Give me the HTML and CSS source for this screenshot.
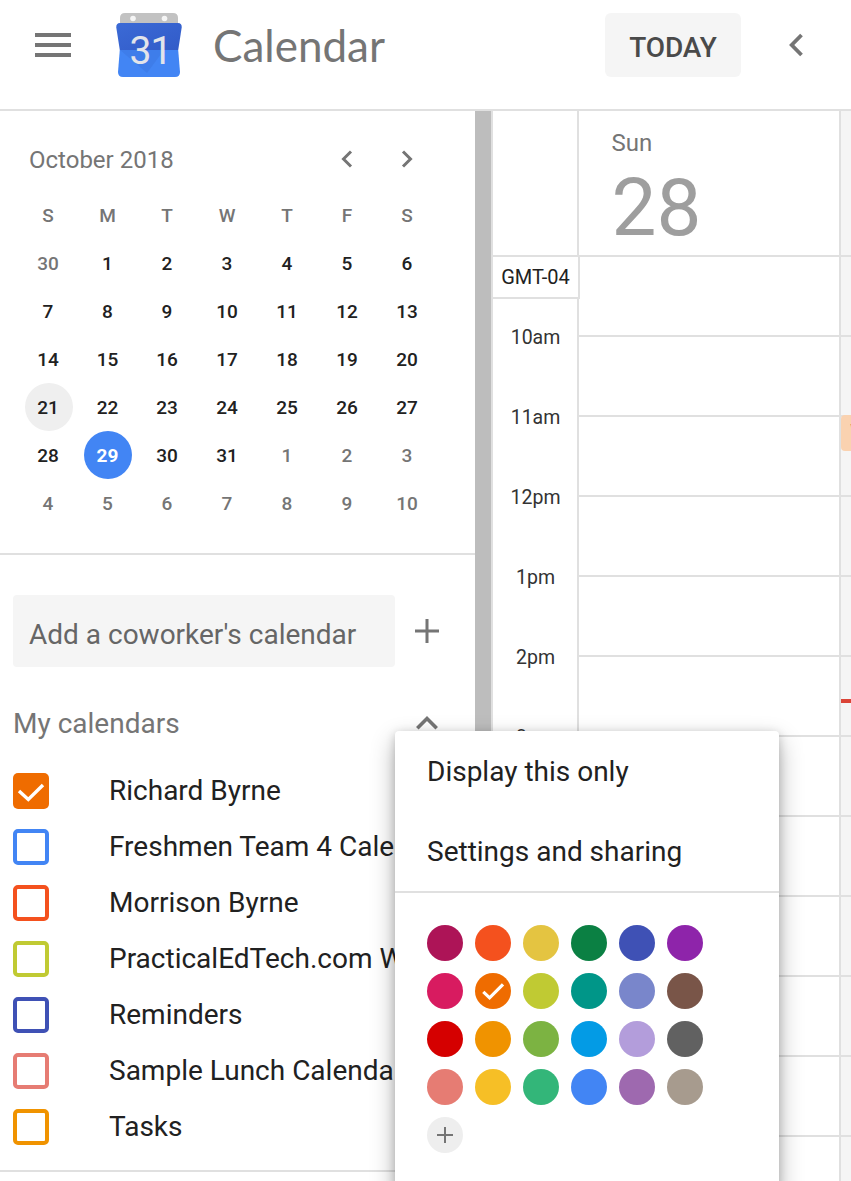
FILE: index.html
```html
<!DOCTYPE html>
<html lang="en">
<head>
<meta charset="utf-8">
<title>Calendar</title>
<link rel="stylesheet" href="styles.css">
</head>
<body>
<div class="app">
  <header class="topbar">
    <svg class="menu-icon" width="36" height="24" viewBox="0 0 36 24"><path fill="#757575" d="M0 0h36v4H0zM0 10h36v4H0zM0 20h36v4H0z"/></svg>
    <svg class="logo" width="66" height="66" viewBox="0 0 66 66">
      <defs>
        <linearGradient id="top" x1="0" y1="0" x2="1" y2="1"><stop offset="0" stop-color="#3b6ad6"/><stop offset="1" stop-color="#325bc8"/></linearGradient>
      </defs>
      <path fill="#c2c2c2" d="M4 14V5q0-5 5-5h48q5 0 5 5v9z"/>
      <circle cx="17" cy="5.500" r="2.800" fill="#f5f5f5"/><circle cx="48.500" cy="5.500" r="2.800" fill="#f5f5f5"/>
      <path fill="url(#top)" d="M4 10h58q4 0 3.700 4.500L62.200 37H3.800L.3 14.500Q0 10 4 10z"/>
      <path fill="#4285f4" d="M3.800 37h58.400L64 59q0 5-5 5H7q-5 0-5-5z"/>
      <path fill="#3c78e2" d="M4 37h44L31 60z" opacity=".6"/>
      <text class="logo-text" x="34.500" y="51" text-anchor="middle">31</text>
    </svg>
    <h1 class="brand">Calendar</h1>
    <button class="today">TODAY</button>
    <svg class="prev" width="14" height="24" viewBox="0 0 14 24"><path fill="none" stroke="#757575" stroke-width="3.800" d="M12.500 2 2.700 12l9.800 10"/></svg>
  </header>

  <main class="main">
    <aside class="sidebar">
      <section class="mini">
        <div class="mini-head">
          <span class="month">October 2018</span>
          <svg class="mini-prev" width="12" height="18" viewBox="0 0 12 18"><path fill="none" stroke="#757575" stroke-width="3" d="M10 1.500 2.500 9l7.500 7.500"/></svg>
          <svg class="mini-next" width="12" height="18" viewBox="0 0 12 18"><path fill="none" stroke="#757575" stroke-width="3" d="M2 1.500 9.500 9 2 16.500"/></svg>
        </div>
        <div class="days">
          <span class="dim">S</span><span class="dim">M</span><span class="dim">T</span><span class="dim">W</span><span class="dim">T</span><span class="dim">F</span><span class="dim">S</span>
          <span class="dim">30</span><span>1</span><span>2</span><span>3</span><span>4</span><span>5</span><span>6</span>
          <span>7</span><span>8</span><span>9</span><span>10</span><span>11</span><span>12</span><span>13</span>
          <span>14</span><span>15</span><span>16</span><span>17</span><span>18</span><span>19</span><span>20</span>
          <span class="hover">21</span><span>22</span><span>23</span><span>24</span><span>25</span><span>26</span><span>27</span>
          <span>28</span><span class="current">29</span><span>30</span><span>31</span><span class="dim">1</span><span class="dim">2</span><span class="dim">3</span>
          <span class="dim">4</span><span class="dim">5</span><span class="dim">6</span><span class="dim">7</span><span class="dim">8</span><span class="dim">9</span><span class="dim">10</span>
        </div>
      </section>

      <div class="coworker">
        <div class="field">Add a coworker's calendar</div>
        <svg width="24" height="24" viewBox="0 0 24 24"><path fill="none" stroke="#757575" stroke-width="3" d="M12 0v24M0 12h24"/></svg>
      </div>

      <div class="group-head">
        <span>My calendars</span>
        <svg width="22" height="14" viewBox="0 0 22 14"><path fill="none" stroke="#757575" stroke-width="3.600" d="m1.300 12.300 9.700-9.700 9.700 9.700"/></svg>
      </div>
      <ul class="calendars">
        <li><span class="box checked"><svg width="36" height="36" viewBox="0 0 36 36"><path fill="none" stroke="#fff" stroke-width="3.400" d="m6 18 9.300 8.500L30 12"/></svg></span><span class="name">Richard Byrne</span></li>
        <li><span class="box blue"></span><span class="name">Freshmen Team 4 Calendar</span></li>
        <li><span class="box tangerine"></span><span class="name">Morrison Byrne</span></li>
        <li><span class="box lime"></span><span class="name">PracticalEdTech.com We</span></li>
        <li><span class="box indigo"></span><span class="name">Reminders</span></li>
        <li><span class="box salmon"></span><span class="name">Sample Lunch Calendar</span></li>
        <li><span class="box amber"></span><span class="name">Tasks</span></li>
      </ul>
    </aside>
    <div class="scrollbar"></div>

    <div class="gutter">
      <div class="gutter-head"></div>
      <div class="zone">GMT-04</div>
      <div class="hours">
        <span>10am</span><span>11am</span><span>12pm</span><span>1pm</span><span>2pm</span><span>3pm</span>
      </div>
    </div>

    <section class="day">
      <div class="day-head"><span class="weekday">Sun</span><span class="date">28</span></div>
      <div class="slots"></div>
    </section>
    <section class="next-day">
      <div class="next-head"></div>
      <div class="slots"><div class="event">W</div><div class="now"></div></div>
    </section>
  </main>

  <div class="popup">
    <div class="item">Display this only</div>
    <div class="item">Settings and sharing</div>
    <div class="swatches">
      <i style="background:#ad1457"></i><i style="background:#f4511e"></i><i style="background:#e4c441"></i><i style="background:#0b8043"></i><i style="background:#3f51b5"></i><i style="background:#8e24aa"></i>
      <i style="background:#d81b60"></i><i style="background:#ef6c00"><svg width="36" height="36" viewBox="0 0 36 36"><path fill="none" stroke="#fff" stroke-width="3.200" d="m8.300 18.800 6.300 6L28 11.300"/></svg></i><i style="background:#c0ca33"></i><i style="background:#009688"></i><i style="background:#7986cb"></i><i style="background:#795548"></i>
      <i style="background:#d50000"></i><i style="background:#f09300"></i><i style="background:#7cb342"></i><i style="background:#039be5"></i><i style="background:#b39ddb"></i><i style="background:#616161"></i>
      <i style="background:#e67c73"></i><i style="background:#f6bf26"></i><i style="background:#33b679"></i><i style="background:#4285f4"></i><i style="background:#9e69af"></i><i style="background:#a79b8e"></i>
      <i style="background:#eeeeee"><svg width="36" height="36" viewBox="0 0 36 36"><path fill="none" stroke="#757575" stroke-width="2" d="M18 10v16M10 18h16"/></svg></i>
    </div>
  </div>
</div>
</body>
</html>
```

FILE: styles.css
```css
* { box-sizing: border-box; }
body { margin: 0; background: #fff; font-family: Roboto, "Liberation Sans", sans-serif; color: #212121; }
svg { display: block; flex: none; }
.app { position: relative; width: 851px; height: 1181px; overflow: hidden; display: flex; flex-direction: column; }

.topbar { height: 111px; flex: none; border-bottom: 2px solid #e0e0e0; display: flex; align-items: flex-start; }
.menu-icon { margin: 33px 0 0 35px; }
.logo { margin: 13px 0 0 45px; }
.logo-text { font: 400 39px Roboto, sans-serif; letter-spacing: -1px; fill: #e2e4ea; }
.brand { margin: 17px 0 0 31px; width: 392px; height: 56px; line-height: 56px; font-family: Lato, sans-serif; font-weight: 400; font-size: 44px; color: #757575; white-space: nowrap; }
.today { margin-top: 13px; width: 136px; height: 64px; padding: 5px 0 0; border: 0; border-radius: 6px; background: #f5f5f5; color: #4a4a4a; font: 500 28px Roboto, sans-serif; letter-spacing: -.1px; }
.prev { margin: 33px 0 0 48px; }

.main { flex: 1; min-height: 0; display: flex; }
.sidebar { width: 475px; height: 1061px; flex: none; overflow: hidden; border-bottom: 2px solid #e0e0e0; }
.scrollbar { width: 16px; flex: none; background: #bdbdbd; }

.mini { height: 444px; border-bottom: 2px solid #e0e0e0; }
.mini-head { height: 80px; padding: 17px 0 0 29px; display: flex; align-items: center; }
.month { width: 312px; font-size: 24px; line-height: 28px; color: #757575; }
.mini-prev { margin: 0 48px 2px 0; }
.mini-next { margin-bottom: 2px; }
.days { width: 419px; margin-left: 18px; display: grid; grid-template-columns: 60px 59px repeat(5, 60px); grid-auto-rows: 48px; justify-items: center; font-size: 19px; font-weight: 500; line-height: 50px; text-align: center; }
.days span { width: 48px; height: 48px; }
.dim { color: #757575; }
.days .hover { margin-left: 2px; text-indent: -2px; border-radius: 50%; background: #efefef; }
.days .current { margin-left: 1px; text-indent: -1px; border-radius: 50%; background: #4285f4; color: #fff; font-weight: 700; }

.coworker { margin: 40px 0 0 13px; display: flex; align-items: center; gap: 20px; }
.field { width: 382px; height: 72px; padding: 4px 16px 0; border-radius: 4px; background: #f5f5f5; color: #666; font-size: 28px; line-height: 72px; white-space: nowrap; }
.group-head { height: 96px; padding: 16px 0 0 13px; display: flex; align-items: center; color: #757575; font-size: 28px; }
.group-head span { width: 403px; padding-top: 1px; }
.calendars { margin: 0; padding: 0 0 0 13px; list-style: none; }
.calendars li { height: 56px; display: flex; align-items: center; gap: 60px; font-size: 28px; white-space: nowrap; }
.name { padding-bottom: 2px; }
.box { width: 36px; height: 36px; flex: none; border: 4px solid; border-radius: 5px; }
.checked { border: 0; background: #ef6c00; }
.blue { border-color: #4285f4; }
.tangerine { border-color: #f4511e; }
.lime { border-color: #c0ca33; }
.indigo { border-color: #3f51b5; }
.salmon { border-color: #e67c73; }
.amber { border-color: #f09300; }

.gutter { width: 88px; flex: none; border-left: 2px solid #e0e0e0; border-right: 2px solid #e0e0e0; height: 1070px; }
.gutter-head { height: 146px; border-bottom: 2px solid #e0e0e0; }
.zone { position: relative; width: 87px; height: 42px; border: solid #e0e0e0; border-width: 0 2px 2px 0; background: #fff; font-size: 20px; line-height: 41px; text-align: center; white-space: nowrap; }
.hours { display: flex; flex-direction: column; font-size: 19.500px; text-align: center; height: 771px; padding-left: 1px; overflow: hidden; }
.hours span { height: 80px; line-height: 77px; flex: none; color: #333; }
.day { width: 262px; flex: none; border-right: 2px solid #e0e0e0; }
.day-head { height: 146px; border-bottom: 2px solid #e0e0e0; padding: 18px 0 0 32.500px; display: flex; flex-direction: column; }
.weekday { font-size: 24px; line-height: 28px; color: #757575; }
.date { margin-top: 10px; font-size: 80px; line-height: 82px; color: #9e9e9e; }
.slots { height: 924px; background: repeating-linear-gradient(transparent 0 78px, #e0e0e0 78px 80px); }
.next-day { flex: 1; min-width: 0; background: #f5f5f5; }
.next-head { height: 146px; border-bottom: 2px solid #e0e0e0; }
.next-day .slots { padding-top: 158px; }
.event { height: 36px; padding-left: 9px; border-radius: 4px 0 0 4px; background: #fad2b0; color: #7b6250; font-size: 20px; line-height: 34px; overflow: hidden; }
.now { margin-top: 248px; height: 4px; background: #db4437; }

.popup { position: absolute; left: 395px; top: 731px; width: 384px; height: 460px; border-radius: 4px; background: #fff; box-shadow: 0 10px 24px 0 rgba(0,0,0,.3), 0 2px 10px rgba(0,0,0,.18); }
.item { height: 80px; padding-left: 32px; line-height: 81px; font-size: 28px; }
.swatches { border-top: 2px solid #e0e0e0; padding: 32px; display: grid; grid-template-columns: repeat(6, 36px); gap: 12px; }
.swatches i { width: 36px; height: 36px; border-radius: 50%; }
```
